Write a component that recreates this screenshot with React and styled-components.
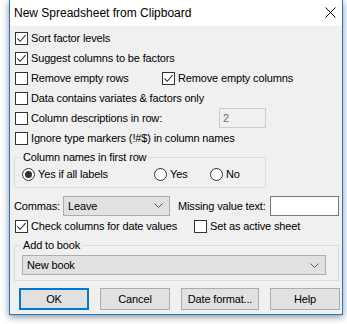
import React from "react";
import styled, { createGlobalStyle } from "styled-components";

const GlobalStyle = createGlobalStyle`
  html, body {
    margin: 0;
    padding: 0;
    background: #ffffff;
  }
  body {
    font-family: "Liberation Sans", Arial, sans-serif;
    font-size: 11px;
    letter-spacing: -0.15px;
    color: #000000;
  }
`;

const Check = ({ checked, label, width }) => (
  <CheckItem width={width}>
    <Box>
      {checked && (
        <svg width="11" height="11" viewBox="0 0 11 11">
          <path d="M1.5 5.5 L4.2 8.3 L9.6 2.2" fill="none" stroke="#333" strokeWidth="1.1" />
        </svg>
      )}
    </Box>
    <Label>{label}</Label>
  </CheckItem>
);

const Radio = ({ checked, label, width }) => (
  <CheckItem width={width}>
    <Circle>{checked && <Dot />}</Circle>
    <Label>{label}</Label>
  </CheckItem>
);

const Chevron = () => (
  <svg width="9" height="5" viewBox="0 0 9 5">
    <path d="M0.5 0.5 L4.5 4.5 L8.5 0.5" fill="none" stroke="#555" strokeWidth="1" />
  </svg>
);

const App = () => {
  return (
    <>
      <GlobalStyle />
      <Page>
        <Window>
          <TitleBar>
            <Title>New Spreadsheet from Clipboard</Title>
            <CloseIcon>
              <svg width="11" height="11" viewBox="0 0 11 11">
                <path d="M0.5 0.5 L10.5 10.5 M10.5 0.5 L0.5 10.5" stroke="#000" strokeWidth="1" />
              </svg>
            </CloseIcon>
          </TitleBar>
          <Body>
            <Row>
              <Check checked label="Sort factor levels" />
            </Row>
            <Row>
              <Check checked label="Suggest columns to be factors" />
            </Row>
            <Row>
              <Check label="Remove empty rows" width="147px" />
              <Check checked label="Remove empty columns" />
            </Row>
            <Row>
              <Check label="Data contains variates & factors only" />
            </Row>
            <Row>
              <Check label="Column descriptions in row:" width="204px" />
              <TextBox disabled>2</TextBox>
            </Row>
            <Row>
              <Check label="Ignore type markers (!#$) in column names" />
            </Row>
            <Group width="252px" top="3px">
              <Legend>Column names in first row</Legend>
              <GroupRow>
                <Radio checked label="Yes if all labels" width="132px" />
                <Radio label="Yes" width="56px" />
                <Radio label="No" />
              </GroupRow>
            </Group>
            <FieldRow>
              <FieldLabel width="49px">Commas:</FieldLabel>
              <Combo width="107px">
                <span>Leave</span>
                <Chevron />
              </Combo>
              <FieldLabel pad="8px" width="92px">Missing value text:</FieldLabel>
              <TextBox width="69px">{""}</TextBox>
            </FieldRow>
            <Row>
              <Check checked label="Check columns for date values" width="179px" />
              <Check label="Set as active sheet" />
            </Row>
            <Group width="325px" top="3px">
              <Legend>Add to book</Legend>
              <BookRow>
                <Combo width="304px">
                  <span>New book</span>
                  <Chevron />
                </Combo>
              </BookRow>
            </Group>
            <Buttons>
              <Button primary width="70px">OK</Button>
              <Button width="70px">Cancel</Button>
              <Button width="78px">Date format...</Button>
              <Button width="70px">Help</Button>
            </Buttons>
          </Body>
        </Window>
      </Page>
    </>
  );
};

export default App;

const Page = styled.div`
  width: 347px;
  height: 324px;
  overflow: hidden;
`;

const Window = styled.div`
  margin-left: 9px;
  width: 334px;
  height: 315px;
  box-sizing: border-box;
  border: 1px solid #1c7ad2;
  border-top: none;
  background: #f0f0f0;
  box-shadow: 0 2px 7px rgba(0, 0, 0, 0.45);
  display: flex;
  flex-direction: column;
`;

const TitleBar = styled.div`
  height: 25px;
  flex-shrink: 0;
  background: #ffffff;
  display: flex;
  align-items: center;
  justify-content: space-between;
  padding: 0 5px 1px 4px;
`;

const Title = styled.div`
  font-size: 12px;
  letter-spacing: 0;
`;

const CloseIcon = styled.div`
  display: flex;
  margin-right: 1px;
`;

const Body = styled.div`
  padding: 2px 0 0 4px;
  display: flex;
  flex-direction: column;
`;

const Row = styled.div`
  height: 20px;
  flex-shrink: 0;
  display: flex;
  align-items: center;
  padding-left: 1px;
`;

const CheckItem = styled.div`
  display: flex;
  align-items: center;
  gap: 3px;
  width: ${(p) => p.width || "auto"};
  flex-shrink: 0;
`;

const Box = styled.div`
  width: 13px;
  height: 13px;
  box-sizing: border-box;
  border: 1px solid #333333;
  background: #ffffff;
  display: flex;
  align-items: center;
  justify-content: center;
`;

const Circle = styled.div`
  width: 13px;
  height: 13px;
  box-sizing: border-box;
  border: 1px solid #333333;
  border-radius: 50%;
  background: #ffffff;
  display: flex;
  align-items: center;
  justify-content: center;
`;

const Dot = styled.div`
  width: 7px;
  height: 7px;
  border-radius: 50%;
  background: #333333;
`;

const Label = styled.span`
  white-space: nowrap;
`;

const TextBox = styled.div`
  width: ${(p) => p.width || "47px"};
  height: 20px;
  box-sizing: border-box;
  border: 1px solid ${(p) => (p.disabled ? "#cccccc" : "#7a7a7a")};
  background: ${(p) => (p.disabled ? "#f0f0f0" : "#ffffff")};
  color: #6d6d6d;
  padding-left: 3px;
  line-height: 18px;
  flex-shrink: 0;
`;

const Group = styled.fieldset`
  margin: ${(p) => p.top} 0 0 0;
  width: ${(p) => p.width};
  box-sizing: border-box;
  border: 1px solid #dcdcdc;
  padding: 0 0 0 7px;
  flex-shrink: 0;
`;

const Legend = styled.legend`
  padding: 0 2px;
  margin-left: -1px;
  line-height: 12px;
`;

const GroupRow = styled.div`
  height: 22px;
  display: flex;
  align-items: center;
  margin-bottom: 2px;
`;

const BookRow = styled.div`
  padding: 4px 0 5px 0;
`;

const FieldRow = styled.div`
  margin-top: 7px;
  height: 21px;
  flex-shrink: 0;
  display: flex;
  align-items: center;
`;

const FieldLabel = styled.div`
  width: ${(p) => p.width};
  padding-left: ${(p) => p.pad || "0"};
  white-space: nowrap;
  flex-shrink: 0;
`;

const Combo = styled.div`
  width: ${(p) => p.width};
  height: 20px;
  box-sizing: border-box;
  border: 1px solid #adadad;
  background: #e1e1e1;
  display: flex;
  align-items: center;
  justify-content: space-between;
  padding: 0 6px 0 4px;
  flex-shrink: 0;
`;

const Buttons = styled.div`
  margin-top: 7px;
  padding-left: 5px;
  display: flex;
  gap: 11px;
`;

const Button = styled.div`
  width: ${(p) => p.width};
  height: 22px;
  box-sizing: border-box;
  border: ${(p) => (p.primary ? "2px solid #0078d7" : "1px solid #adadad")};
  background: #e1e1e1;
  display: flex;
  align-items: center;
  justify-content: center;
`;
